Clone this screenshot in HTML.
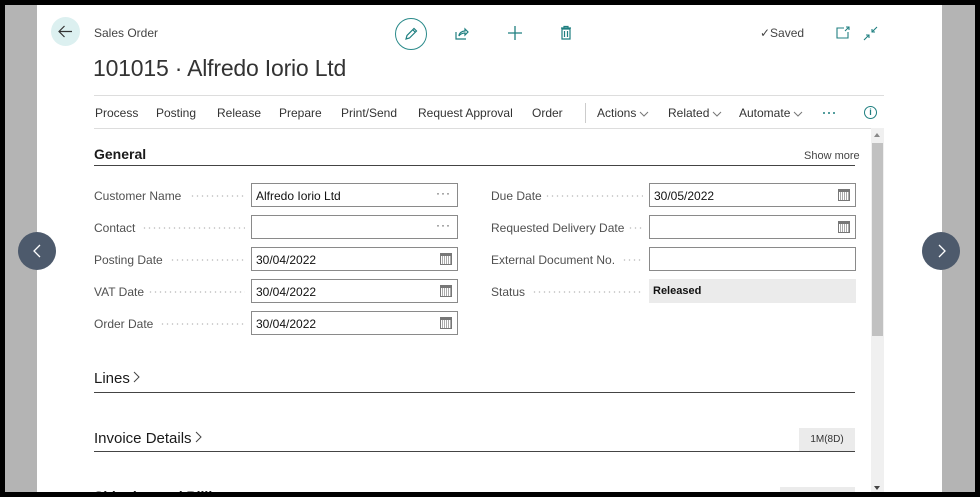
<!DOCTYPE html>
<html><head><meta charset="utf-8"><style>
*{margin:0;padding:0;box-sizing:border-box}
html,body{width:980px;height:497px;overflow:hidden}
body{background:#000;position:relative;font-family:"Liberation Sans",sans-serif;color:#212121}
.abs{position:absolute}
.lbl{position:absolute;font-size:12px;color:#505050;white-space:nowrap}
.dots{position:absolute;height:2px;background-image:radial-gradient(circle,#bbb 0.6px,transparent 0.9px);background-size:5px 2px}
.inp{position:absolute;height:24px;border:1px solid #8a8a8a;background:#fff;font-size:12px;padding:5px 0 0 4px;color:#111}
.cal{position:absolute;right:5px;top:5px;width:12px;height:12px;border:1px solid #777;border-top-width:3px;background:repeating-linear-gradient(90deg,#fff 0 1px,#aaa 1px 2px)}
.ell{position:absolute;right:6px;top:2px;font-size:12px;color:#444;letter-spacing:1px}
.menu{position:absolute;top:106px;font-size:12px;color:#333;white-space:nowrap}
.chev{display:inline-block;vertical-align:middle;margin-left:3px}
.sec{position:absolute;left:94px;width:761px;font-size:15px;color:#1a1a1a;border-bottom:1px solid #444}
</style></head><body>
<div class="abs" style="left:5px;top:5px;width:970px;height:487px;background:#b4b4b4"></div>
<div class="abs" style="left:37px;top:5px;width:905px;height:487px;background:#fff"></div>
<div class="abs" style="left:51px;top:17px;width:29px;height:29px;border-radius:50%;background:#dcf0f0"></div>
<svg class="abs" style="left:57px;top:23px" width="17" height="17" viewBox="0 0 17 17"><path d="M15 8.5H2M7.5 3L2 8.5 7.5 14" stroke="#333" stroke-width="1.2" fill="none"/></svg>
<div class="abs" style="left:94px;top:26px;font-size:12px;color:#444">Sales Order</div>
<div class="abs" style="left:93px;top:55px;font-size:23px;color:#333;letter-spacing:-0.2px">101015 · Alfredo Iorio Ltd</div>
<div class="abs" style="left:395px;top:18px;width:32px;height:32px;border-radius:50%;border:1.5px solid #2a8a8a"></div>
<svg class="abs" style="left:403px;top:26px" width="16" height="16" viewBox="0 0 16 16"><path d="M3 13l1-3.5 7-7 2.5 2.5-7 7zM10 4l2.5 2.5" stroke="#1f7f80" stroke-width="1.2" fill="none"/></svg>
<svg class="abs" style="left:454px;top:26px" width="16" height="16" viewBox="0 0 16 16"><path d="M2 6v7h10M5 10c0-3 3-5 6-5V3l3 3-3 3V7c-2 0-5 1-6 3z" stroke="#1f7f80" stroke-width="1.2" fill="none"/></svg>
<svg class="abs" style="left:507px;top:25px" width="16" height="16" viewBox="0 0 16 16"><path d="M8 1v14M1 8h14" stroke="#1f7f80" stroke-width="1.3"/></svg>
<svg class="abs" style="left:558px;top:25px" width="16" height="16" viewBox="0 0 16 16"><path d="M3 3h10M6 3V1.5h4V3M4 4h8v10H4zM6.5 6v6M9.5 6v6" stroke="#1f7f80" stroke-width="1.2" fill="none"/></svg>
<div class="abs" style="left:760px;top:26px;font-size:12px;color:#444">✓Saved</div>
<svg class="abs" style="left:836px;top:26px" width="14" height="13" viewBox="0 0 14 13"><path d="M8 2H1v10h11V6M10 1h3v3M13 1l-4 4" stroke="#1f7f80" stroke-width="1.1" fill="none"/></svg>
<svg class="abs" style="left:863px;top:26px" width="15" height="15" viewBox="0 0 15 15"><path d="M1 14l5-5M3 9h3v3M14 1L9 6M9 3v3h3" stroke="#1f7f80" stroke-width="1.1" fill="none"/></svg>
<div class="abs" style="left:94px;top:95px;width:790px;height:1px;background:#ddd"></div>
<div class="abs" style="left:94px;top:128px;width:790px;height:1px;background:#ddd"></div>
<div class="menu" style="left:95px">Process</div>
<div class="menu" style="left:156px">Posting</div>
<div class="menu" style="left:217px">Release</div>
<div class="menu" style="left:279px">Prepare</div>
<div class="menu" style="left:341px">Print/Send</div>
<div class="menu" style="left:418px">Request Approval</div>
<div class="menu" style="left:532px">Order</div>
<div class="abs" style="left:585px;top:103px;width:1px;height:20px;background:#ccc"></div>
<div class="menu" style="left:597px">Actions<svg class="chev" width="10" height="6" viewBox="0 0 10 6"><path d="M1 1l4 4 4-4" stroke="#777" fill="none"/></svg></div>
<div class="menu" style="left:668px">Related<svg class="chev" width="10" height="6" viewBox="0 0 10 6"><path d="M1 1l4 4 4-4" stroke="#777" fill="none"/></svg></div>
<div class="menu" style="left:739px">Automate<svg class="chev" width="10" height="6" viewBox="0 0 10 6"><path d="M1 1l4 4 4-4" stroke="#777" fill="none"/></svg></div>
<svg class="abs" style="left:822px;top:111px" width="14" height="4"><circle cx="2" cy="2" r="1" fill="#1f7f80"/><circle cx="7" cy="2" r="1" fill="#1f7f80"/><circle cx="12" cy="2" r="1" fill="#1f7f80"/></svg>
<div class="abs" style="left:864px;top:106px;width:13px;height:13px;border-radius:50%;border:1.2px solid #1f7f80;font-size:9px;color:#1f7f80;text-align:center;line-height:11px;font-weight:bold">i</div>
<div class="sec" style="top:146px;height:20px;font-weight:bold;font-size:14px">General</div>
<div class="abs" style="left:804px;top:150px;font-size:11px;color:#444">Show more</div>
<div class="lbl" style="left:94px;top:189px">Customer Name</div><div class="dots" style="left:190px;width:55px;top:195px"></div>
<div class="inp" style="left:251px;top:183px;width:207px">Alfredo Iorio Ltd<span class="ell">···</span></div>
<div class="lbl" style="left:94px;top:221px">Contact</div><div class="dots" style="left:142px;width:103px;top:227px"></div>
<div class="inp" style="left:251px;top:215px;width:207px"><span class="ell">···</span></div>
<div class="lbl" style="left:94px;top:253px">Posting Date</div><div class="dots" style="left:170px;width:75px;top:259px"></div>
<div class="inp" style="left:251px;top:247px;width:207px">30/04/2022<span class="cal"></span></div>
<div class="lbl" style="left:94px;top:285px">VAT Date</div><div class="dots" style="left:148px;width:97px;top:291px"></div>
<div class="inp" style="left:251px;top:279px;width:207px">30/04/2022<span class="cal"></span></div>
<div class="lbl" style="left:94px;top:317px">Order Date</div><div class="dots" style="left:160px;width:85px;top:323px"></div>
<div class="inp" style="left:251px;top:311px;width:207px">30/04/2022<span class="cal"></span></div>
<div class="lbl" style="left:491px;top:189px">Due Date</div><div class="dots" style="left:545px;width:98px;top:195px"></div>
<div class="inp" style="left:649px;top:183px;width:207px">30/05/2022<span class="cal"></span></div>
<div class="lbl" style="left:491px;top:221px">Requested Delivery Date</div><div class="dots" style="left:628px;width:15px;top:227px"></div>
<div class="inp" style="left:649px;top:215px;width:207px"><span class="cal"></span></div>
<div class="lbl" style="left:491px;top:253px">External Document No.</div><div class="dots" style="left:622px;width:21px;top:259px"></div>
<div class="inp" style="left:649px;top:247px;width:207px"></div>
<div class="lbl" style="left:491px;top:285px">Status</div><div class="dots" style="left:532px;width:111px;top:291px"></div>
<div class="abs" style="left:649px;top:279px;width:207px;height:24px;background:#ebebeb;font-size:11px;font-weight:bold;padding:6px 0 0 4px;color:#111">Released</div>
<div class="sec" style="top:370px;height:23px">Lines<svg style="margin-left:2px" width="8" height="12" viewBox="0 0 8 12"><path d="M2 1l5 5-5 5" stroke="#444" fill="none"/></svg></div>
<div class="sec" style="top:430px;height:22px">Invoice Details<svg style="margin-left:2px" width="8" height="12" viewBox="0 0 8 12"><path d="M2 1l5 5-5 5" stroke="#444" fill="none"/></svg></div>
<div class="abs" style="left:799px;top:428px;width:56px;height:23px;background:#ebebeb;font-size:10px;color:#333;text-align:center;line-height:23px">1M(8D)</div>
<div class="abs" style="left:94px;top:488px;font-size:14px;font-weight:bold;color:#222">Shipping and Billing</div>
<div class="abs" style="left:780px;top:487px;width:75px;height:5px;background:#ebebeb"></div>
<div class="abs" style="left:871px;top:128px;width:13px;height:364px;background:#f0f0f0"></div>
<div class="abs" style="left:872px;top:143px;width:11px;height:193px;background:#c1c1c1"></div>
<div class="abs" style="left:874px;top:133px;border:3px solid transparent;border-bottom:4px solid #888;border-top:0"></div>
<div class="abs" style="left:874px;top:486px;border:3px solid transparent;border-top:4px solid #444;border-bottom:0"></div>
<div class="abs" style="left:0;top:492px;width:980px;height:5px;background:#000"></div>
<div class="abs" style="left:18px;top:232px;width:38px;height:38px;border-radius:50%;background:#4d5a6c"></div>
<svg class="abs" style="left:30px;top:243px" width="14" height="16" viewBox="0 0 14 16"><path d="M10 2L4 8l6 6" stroke="#fff" stroke-width="1.3" fill="none"/></svg>
<div class="abs" style="left:922px;top:232px;width:38px;height:38px;border-radius:50%;background:#4d5a6c"></div>
<svg class="abs" style="left:935px;top:243px" width="14" height="16" viewBox="0 0 14 16"><path d="M4 2l6 6-6 6" stroke="#fff" stroke-width="1.3" fill="none"/></svg>
</body></html>
